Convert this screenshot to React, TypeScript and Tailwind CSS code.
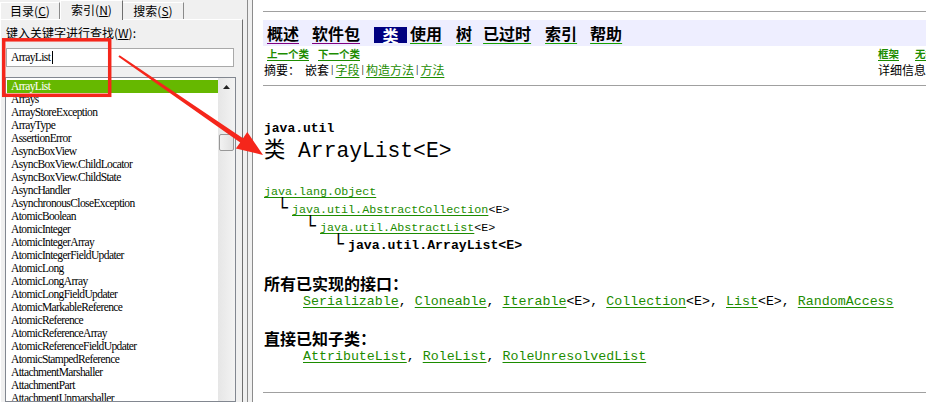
const cjk = "font-['Noto_Sans_CJK_SC',sans-serif]";
const serif = "font-['Liberation_Serif','Noto_Sans_CJK_SC',serif]";
const mono = "font-['Liberation_Mono','DejaVu_Sans_Mono','Noto_Sans_CJK_SC',monospace]";

const classes = [
  "ArrayList",
  "Arrays",
  "ArrayStoreException",
  "ArrayType",
  "AssertionError",
  "AsyncBoxView",
  "AsyncBoxView.ChildLocator",
  "AsyncBoxView.ChildState",
  "AsyncHandler",
  "AsynchronousCloseException",
  "AtomicBoolean",
  "AtomicInteger",
  "AtomicIntegerArray",
  "AtomicIntegerFieldUpdater",
  "AtomicLong",
  "AtomicLongArray",
  "AtomicLongFieldUpdater",
  "AtomicMarkableReference",
  "AtomicReference",
  "AtomicReferenceArray",
  "AtomicReferenceFieldUpdater",
  "AtomicStampedReference",
  "AttachmentMarshaller",
  "AttachmentPart",
  "AttachmentUnmarshaller",
];

const navItems = [
  { label: "概述", gap: "ml-[4px]", visited: true },
  { label: "软件包", gap: "ml-[13px]", visited: true },
  { label: "类", gap: "ml-[14px]", current: true },
  { label: "使用", gap: "ml-[3px]" },
  { label: "树", gap: "ml-[14px]" },
  { label: "已过时", gap: "ml-[11px]" },
  { label: "索引", gap: "ml-[14px]" },
  { label: "帮助", gap: "ml-[13px]" },
];

function Link({ children, className = "" }: { children: React.ReactNode; className?: string }) {
  return <span className={`text-[#1c8c00] underline underline-offset-2 ${className}`}>{children}</span>;
}

// tree connector, drawn with the box-drawing glyph
function Elbow() {
  return (
    <span className="relative inline-block h-[18px] w-[14px] align-top">
      <span className="absolute left-[-1px] top-[-2px] font-['DejaVu_Sans_Mono',monospace] text-[18px] leading-[18px]">└</span>
    </span>
  );
}

function LeftPane() {
  return (
    <div className={`flex w-[243px] shrink-0 flex-col bg-[#f0f0f0] text-[12px] text-black ${cjk}`}>
      {/* tabs */}
      <div className="relative z-10 flex h-[19px] items-end">
        <div className="flex h-[17px] w-[60px] items-center justify-center border-t border-l border-r border-t-white border-l-white border-r-[#8a8a8a] leading-none">
          目录(<u>C</u>)
        </div>
        <div className="-mb-px flex h-[20px] w-[63px] items-center justify-center border-t border-l border-r border-t-white border-l-white border-r-[#6f6f6f] bg-[#f0f0f0] pb-[2px] leading-none">
          索引(<u>N</u>)
        </div>
        <div className="flex h-[17px] w-[61px] items-center justify-center border-t border-r border-t-white border-r-[#8a8a8a] leading-none">
          搜索(<u>S</u>)
        </div>
      </div>

      <div className="flex min-h-0 flex-1 flex-col border-t border-l border-r border-t-white border-l-white border-r-[#6f6f6f] pl-[4px]">
        <div className="mt-[6px] h-[14px] pl-px leading-[14px]">
          键入关键字进行查找(<u>W</u>):
        </div>
        <div className={`mt-[8px] ml-px flex h-[19px] w-[228px] items-center border border-[#a9a9a9] bg-white pl-[4px] text-[11.5px] tracking-[-0.6px] ${serif}`}>
          ArrayList<span className="ml-[2px] inline-block h-[13px] w-px bg-black" />
        </div>

        <div className="mt-[10px] flex min-h-0 w-[231px] flex-1 border border-[#828790] bg-white">
          <div className={`flex-1 overflow-hidden pt-[2px] pl-px text-[11.5px] tracking-[-0.6px] ${serif}`}>
            {classes.map((c, i) => (
              <div
                key={c}
                className={`h-[13px] whitespace-nowrap pl-[4px] leading-[13px] ${i === 0 ? "bg-[#66b800] text-white" : "text-black"}`}
              >
                {c}
              </div>
            ))}
          </div>
          <div className="flex w-[17px] flex-col bg-gradient-to-r from-[#e6e6e6] to-[#f3f3f3]">
            <div className="flex h-[18px] items-center justify-center">
              <svg width="7" height="4" viewBox="0 0 7 4">
                <path d="M3.5 0 L7 4 L0 4 Z" fill="#222" />
              </svg>
            </div>
            <div className="mt-[38px] mx-px h-[17px] rounded-[2px] border border-[#979797] bg-gradient-to-r from-[#f2f2f2] to-[#e0e0e0]" />
          </div>
        </div>
      </div>
    </div>
  );
}

function Splitter() {
  return (
    <div className="flex w-[10px] shrink-0 bg-[#f0f0f0]">
      <div className="w-[4px]" />
      <div className="w-px bg-[#8c8c8c]" />
      <div className="w-[4px]" />
      <div className="w-px bg-[#8c8c8c]" />
    </div>
  );
}

function RightPane() {
  return (
    <div className={`min-w-0 flex-1 overflow-hidden bg-white pl-[10px] text-black ${cjk}`}>
      <div className="w-[760px]">
        <div className="mt-[11px] h-px bg-[#a0a0a0]" />

        <div className="mt-[8px] flex h-[26px] items-center bg-[#eeeeff] text-[16px] font-bold leading-[26px]">
          {navItems.map((n) =>
            n.current ? (
              <span
                key={n.label}
                className={`${n.gap} mt-[3px] flex h-[16px] w-[33px] items-center justify-center bg-[#000080] leading-none text-white`}
              >
                {n.label}
              </span>
            ) : (
              <span
                key={n.label}
                className={`${n.gap} underline underline-offset-[3px] ${n.visited ? "decoration-[#800080]" : "decoration-[#17a000]"}`}
              >
                {n.label}
              </span>
            )
          )}
        </div>

        <div className="mt-px grid h-[13px] grid-cols-[615px_1fr] text-[10.5px] font-bold leading-[13px]">
          <div className="flex gap-[9px] pl-[4px]">
            <Link>上一个类</Link>
            <Link>下一个类</Link>
          </div>
          <div className="flex gap-[16px]">
            <Link>框架</Link>
            <Link>无框架</Link>
          </div>
        </div>
        <div className="mt-[2px] grid h-[15px] grid-cols-[615px_1fr] text-[12px] leading-[15px]">
          <div className="flex items-center pl-px">
            <span>摘要：</span>
            <span className="ml-[5px]">嵌套</span>
            <span className="mx-[2px] text-[9px]">|</span>
            <Link>字段</Link>
            <span className="mx-[2px] text-[9px]">|</span>
            <Link>构造方法</Link>
            <span className="mx-[2px] text-[9px]">|</span>
            <Link>方法</Link>
          </div>
          <div>详细信息</div>
        </div>

        <div className="mt-[8px] h-px bg-[#a0a0a0]" />

        <div className={`mt-[35px] h-[16px] pl-px text-[13px] font-bold leading-[16px] ${mono}`}>java.util</div>
        <div className={`mt-[2px] h-[24px] pl-px text-[21.3px] leading-[24px] ${mono}`}>类 ArrayList&lt;E&gt;</div>

        <div className={`mt-[20px] pl-px text-[11.7px] leading-[18px] ${mono}`}>
          <div className="h-[18px]">
            <Link>java.lang.Object</Link>
          </div>
          <div className="h-[18px] pl-[14px]">
            <Elbow />
            <Link>java.util.AbstractCollection</Link>&lt;E&gt;
          </div>
          <div className="h-[18px] pl-[42px]">
            <Elbow />
            <Link>java.util.AbstractList</Link>&lt;E&gt;
          </div>
          <div className="h-[18px] pl-[70px]">
            <Elbow />
            <span className="text-[13.2px] font-bold">java.util.ArrayList&lt;E&gt;</span>
          </div>
        </div>

        <div className="mt-[18px] h-[20px] pl-px text-[16px] font-bold leading-[20px]">所有已实现的接口：</div>
        <div className={`h-[18px] pl-[40px] text-[13.3px] leading-[18px] ${mono}`}>
          <Link>Serializable</Link>, <Link>Cloneable</Link>, <Link>Iterable</Link>&lt;E&gt;,{" "}
          <Link>Collection</Link>&lt;E&gt;, <Link>List</Link>&lt;E&gt;, <Link>RandomAccess</Link>
        </div>

        <div className="mt-[17px] h-[20px] pl-px text-[16px] font-bold leading-[20px]">直接已知子类：</div>
        <div className={`h-[18px] pl-[40px] text-[13.3px] leading-[18px] ${mono}`}>
          <Link>AttributeList</Link>, <Link>RoleList</Link>, <Link>RoleUnresolvedList</Link>
        </div>

        <div className="mt-[26px] h-px bg-[#a0a0a0]" />
      </div>
    </div>
  );
}

function Annotations() {
  return (
    <svg
      className="pointer-events-none absolute inset-0"
      width="926"
      height="402"
      viewBox="0 0 926 402"
    >
      <rect x="3.7" y="39.8" width="106" height="55.5" fill="none" stroke="#f5261b" strokeWidth="3.5" />
      <polygon
        points="118.4,56.8 240.2,142.4 235.9,148.5 263,155 247.3,132.1 243,138.2 119.6,55.2"
        fill="#f5261b"
      />
    </svg>
  );
}

export default function App() {
  return (
    <div className="relative flex h-[402px] w-[926px] overflow-hidden bg-white">
      <LeftPane />
      <Splitter />
      <RightPane />
      <Annotations />
    </div>
  );
}
